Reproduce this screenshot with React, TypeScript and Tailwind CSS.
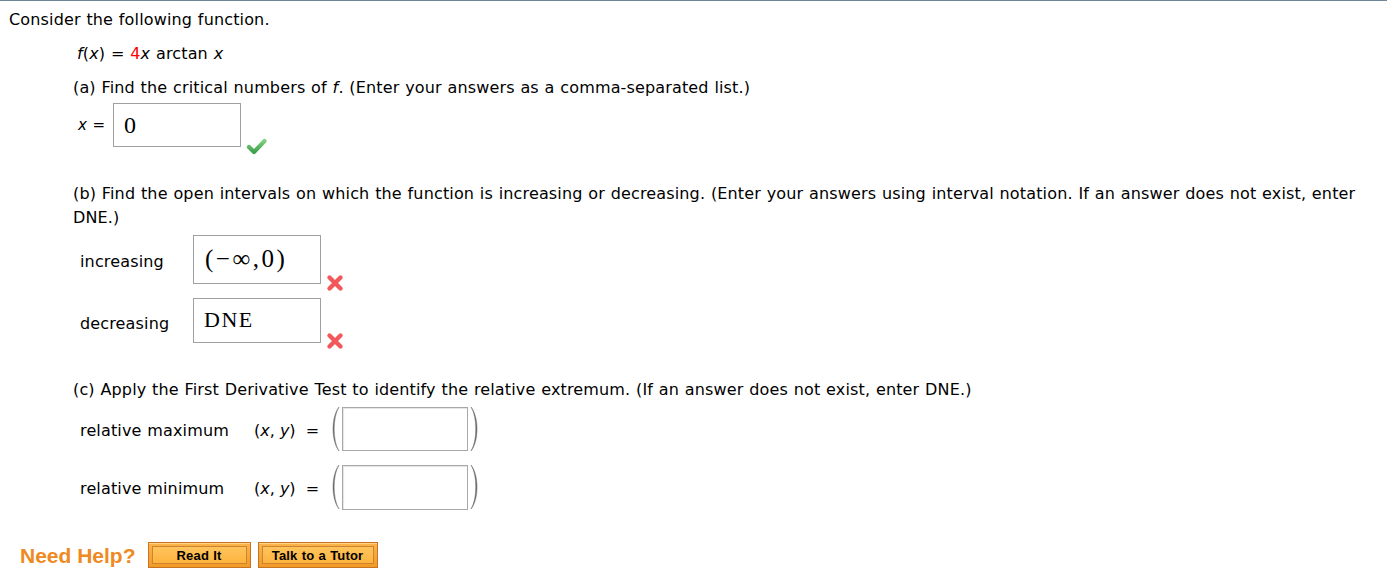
import React from "react";

const Check = () => (
  <svg width="21" height="17" viewBox="0 0 21 17" className="block">
    <defs>
      <linearGradient id="gck" x1="0" y1="0" x2="0" y2="1">
        <stop offset="0" stopColor="#7fd07f" />
        <stop offset="1" stopColor="#3fa04a" />
      </linearGradient>
    </defs>
    <path d="M3 9 L8 14 L18.5 3" fill="none" stroke="url(#gck)" strokeWidth="4.2" strokeLinecap="round" strokeLinejoin="round" />
  </svg>
);

const Cross = () => (
  <svg width="18" height="18" viewBox="0 0 18 18" className="block">
    <path d="M3.5 3.5 L14.5 14.5 M14.5 3.5 L3.5 14.5" fill="none" stroke="#f2575b" strokeWidth="4.4" strokeLinecap="round" />
  </svg>
);

const LParen = () => (
  <svg width="14" height="46" viewBox="0 0 14 46" className="block">
    <path d="M11 1 C3 11 3 35 11 45 C4.6 35 4.6 11 11 1 Z" fill="#6a6a6a" stroke="#6a6a6a" strokeWidth="0.5" />
  </svg>
);

const RParen = () => (
  <svg width="14" height="46" viewBox="0 0 14 46" className="block">
    <path d="M3 1 C11 11 11 35 3 45 C9.4 35 9.4 11 3 1 Z" fill="#6a6a6a" stroke="#6a6a6a" strokeWidth="0.5" />
  </svg>
);

const OrangeButton = ({ label, w }: { label: string; w: string }) => (
  <div className={`${w} h-[26px] border border-[#c77422] bg-gradient-to-b from-[#fbb54a] to-[#f29a26] p-[3px] shadow-[inset_0_1px_0_#ffd38a]`}>
    <div className="w-full h-full border border-[#cf8230] bg-gradient-to-b from-[#ffc45c] to-[#fdb43d] flex items-center justify-center font-['Liberation_Sans',Arial,sans-serif] font-bold text-[13px] leading-none text-black">
      {label}
    </div>
  </div>
);

export default function App() {
  return (
    <div className="w-[1387px] h-[575px] bg-white border-t border-[#6e8696] font-['DejaVu_Sans',Verdana,sans-serif] text-[16px] tracking-[0.15px] [word-spacing:0.5px] text-black overflow-hidden">
      <div className="pt-[9px] pl-[9px] leading-[20px]">Consider the following function.</div>
      <div className="pl-[73px]">
        <div className="mt-[14px] pl-[4px] leading-[20px]">
          <i>f</i>(<i>x</i>) = <span className="text-[#ff0000]">4</span>
          <i>x</i> arctan <i>x</i>
        </div>
        <div className="mt-[14px] leading-[20px]">
          (a) Find the critical numbers of <i>f</i>. (Enter your answers as a comma-separated list.)
        </div>
        <div className="mt-[5px] flex items-start pl-[5px] h-[44px]">
          <span className="h-[44px] flex items-center w-[35px] text-[15px]">
            <i>x</i>&nbsp;=
          </span>
          <div className="w-[128px] h-[44px] border border-[#a0a0a0] flex items-center pl-[10px] font-['Liberation_Serif',serif] text-[24px] tracking-normal">
            0
          </div>
          <div className="ml-[5px] mt-[35px]">
            <Check />
          </div>
        </div>
        <div className="mt-[35px] leading-[24px] whitespace-nowrap">
          (b) Find the open intervals on which the function is increasing or decreasing. (Enter your answers using interval notation. If an answer does not exist, enter
          <br />
          DNE.)
        </div>
        <div className="mt-[5px] flex items-start h-[49px]">
          <div className="w-[120px] pl-[7px] h-[49px] flex items-center pt-[5px]">increasing</div>
          <div className="w-[128px] h-[49px] border border-[#a0a0a0] flex items-center pl-[11px] font-['Liberation_Serif',serif] text-[25px] tracking-[2.5px] pb-[1px]">
            (−∞,0)
          </div>
          <div className="ml-[5px] mt-[39px]">
            <Cross />
          </div>
        </div>
        <div className="mt-[14px] flex items-start h-[45px]">
          <div className="w-[120px] pl-[7px] h-[45px] flex items-center pt-[6px]">decreasing</div>
          <div className="w-[128px] h-[45px] border border-[#a0a0a0] flex items-center pl-[10px] font-['Liberation_Serif',serif] text-[22px] tracking-[1.5px] pb-[2px]">
            DNE
          </div>
          <div className="ml-[5px] mt-[34px]">
            <Cross />
          </div>
        </div>
        <div className="mt-[37px] leading-[20px]">
          (c) Apply the First Derivative Test to identify the relative extremum. (If an answer does not exist, enter DNE.)
        </div>
        <div className="mt-[6px] flex items-center h-[46px]">
          <div className="w-[181px] pl-[7px] pt-[3px]">relative maximum</div>
          <div className="w-[74px] pt-[3px] tracking-normal [word-spacing:0px]">
            (<i>x</i>, <i>y</i>)&nbsp; =
          </div>
          <LParen />
          <div className="w-[126px] h-[44px] border border-[#a8a8a8] shadow-[inset_1px_1px_1px_#e4e4e4]" />
          <RParen />
        </div>
        <div className="mt-[12px] flex items-center h-[46px]">
          <div className="w-[181px] pl-[7px] pt-[4px]">relative minimum</div>
          <div className="w-[74px] pt-[4px] tracking-normal [word-spacing:0px]">
            (<i>x</i>, <i>y</i>)&nbsp; =
          </div>
          <LParen />
          <div className="w-[126px] h-[45px] border border-[#a8a8a8] shadow-[inset_1px_1px_1px_#e4e4e4]" />
          <RParen />
        </div>
      </div>
      <div className="mt-[32px] pl-[20px] flex items-center h-[26px]">
        <span className="font-['Liberation_Sans',Arial,sans-serif] font-bold text-[21px] text-[#ef8a22] leading-none tracking-normal [word-spacing:0px]">Need Help?</span>
        <div className="ml-[12px]">
          <OrangeButton label="Read It" w="w-[103px]" />
        </div>
        <div className="ml-[7px]">
          <OrangeButton label="Talk to a Tutor" w="w-[120px]" />
        </div>
      </div>
    </div>
  );
}
